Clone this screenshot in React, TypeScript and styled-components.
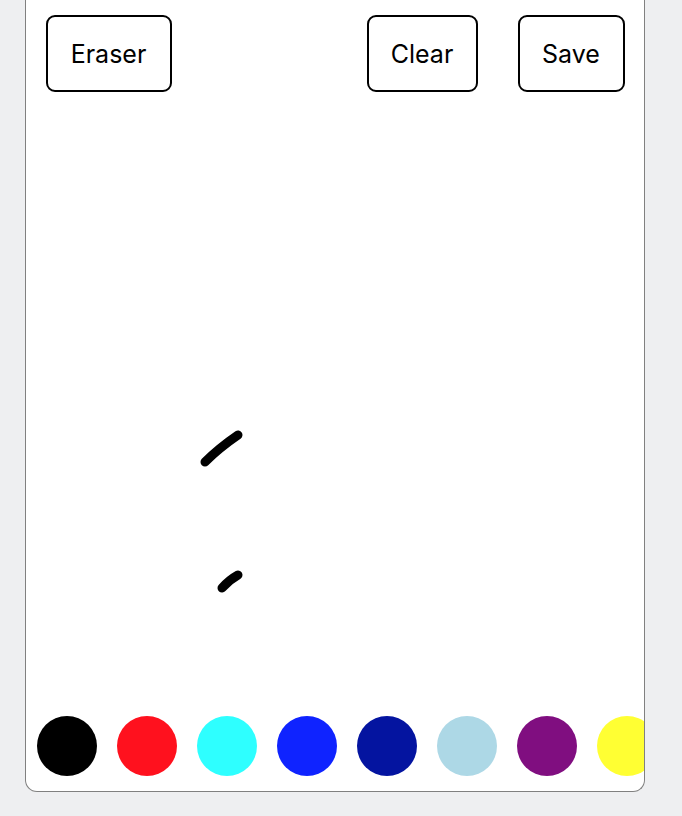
import React from 'react';
import styled, { createGlobalStyle } from 'styled-components';

const GlobalStyle = createGlobalStyle`
  html, body {
    margin: 0;
    padding: 0;
    background: #eeeff1;
    font-family: Inter, "Noto Sans", sans-serif;
  }
`;

const Page = styled.div`
  width: 682px;
  height: 816px;
  overflow: hidden;
`;

const Card = styled.div`
  box-sizing: border-box;
  margin: -12px 0 0 25px;
  width: 620px;
  height: 804px;
  background: #fff;
  border: 1.5px solid #808080;
  border-top: none;
  border-radius: 0 0 12px 12px;
  overflow: hidden;
  display: flex;
  flex-direction: column;
`;

const Toolbar = styled.div`
  display: flex;
  align-items: center;
  gap: 40px;
  padding: 27px 19.5px 0 19.5px;
`;

const Spacer = styled.div`
  flex: 1;
`;

const ToolButton = styled.button<{ $w: number }>`
  box-sizing: border-box;
  width: ${p => p.$w}px;
  height: 77px;
  background: #fff;
  border: 2px solid #000;
  border-radius: 9px;
  font-family: Inter, "Noto Sans", sans-serif;
  font-size: 25px;
  color: #000;
  padding: 0;
  cursor: pointer;
`;

const Canvas = styled.div`
  flex: 1;
  position: relative;
`;

const Drawing = styled.svg`
  position: absolute;
  inset: 0;
  width: 100%;
  height: 100%;
`;

const Palette = styled.div`
  display: flex;
  gap: 20px;
  padding: 0 0 15px 10.5px;
`;

const Swatch = styled.div<{ $color: string }>`
  flex: 0 0 60px;
  height: 60px;
  border-radius: 50%;
  background: ${p => p.$color};
`;

const colors = ['#000000', '#ff111e', '#2effff', '#0f23ff', '#0414a0', '#add8e6', '#800e80', '#ffff33'];

export default function App() {
  return (
    <Page>
      <GlobalStyle />
      <Card>
        <Toolbar>
          <ToolButton $w={126}>Eraser</ToolButton>
          <Spacer />
          <ToolButton $w={111}>Clear</ToolButton>
          <ToolButton $w={107}>Save</ToolButton>
        </Toolbar>
        <Canvas>
          <Drawing>
            <g fill="none" stroke="#000" strokeWidth="9" strokeLinecap="round" strokeLinejoin="round">
              <path d="M179 370 Q193 356 212 343" />
              <path d="M196 496 Q203 488 212 483" />
            </g>
          </Drawing>
        </Canvas>
        <Palette>
          {colors.map(c => (
            <Swatch key={c} $color={c} />
          ))}
        </Palette>
      </Card>
    </Page>
  );
}
